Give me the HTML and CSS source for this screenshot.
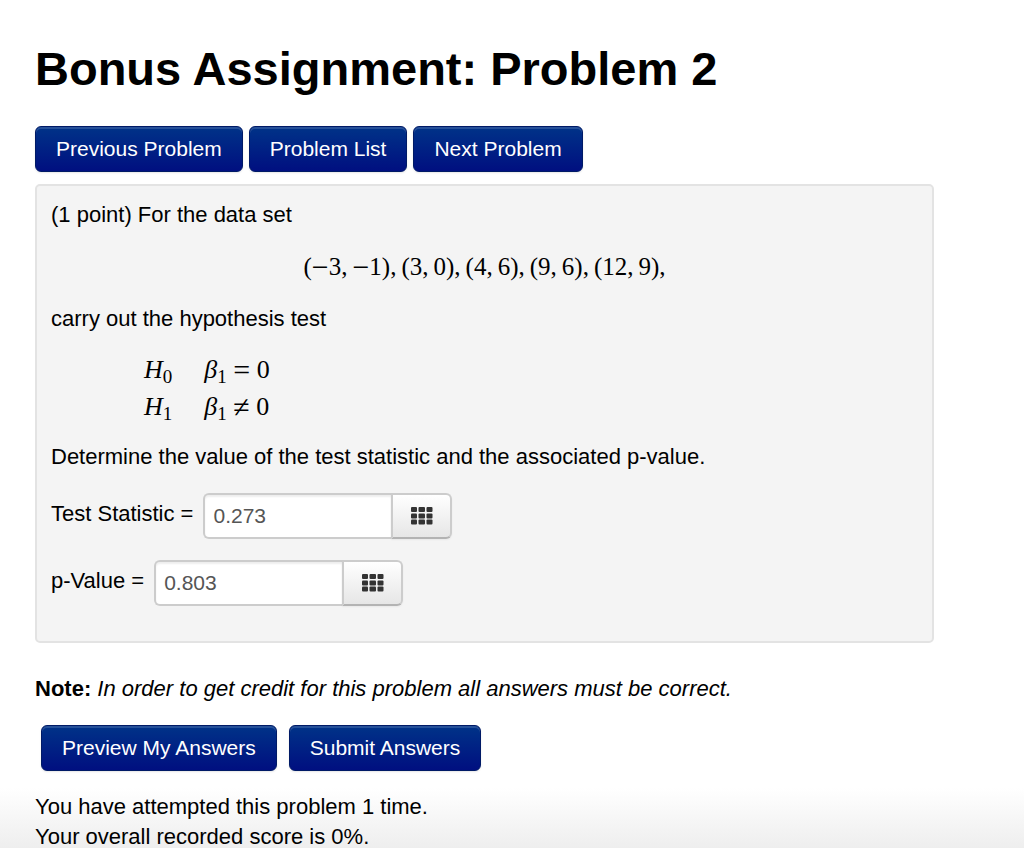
FILE: index.html
```html
<!DOCTYPE html>
<html lang="en">
<head>
  <meta charset="UTF-8" />
  <meta name="viewport" content="width=device-width, initial-scale=1.0"/>
  <title>Bonus Assignment: Problem 2</title>
  <link rel="stylesheet" href="styles.css">
</head>
<body>
  <h1>Bonus Assignment: Problem 2</h1>

  <nav class="problem-nav">
    <button type="button" class="btn">Previous Problem</button>
    <button type="button" class="btn">Problem List</button>
    <button type="button" class="btn">Next Problem</button>
  </nav>

  <form id="problemForm">
    <div class="problem">
      <p>(1 point) For the data set</p>
      <p class="math display">(<span class="op">−</span>3,&thinsp;<span class="op">−</span>1),&thinsp;(3,&thinsp;0),&thinsp;(4,&thinsp;6),&thinsp;(9,&thinsp;6),&thinsp;(12,&thinsp;9),</p>
      <p>carry out the hypothesis test</p>
      <table class="math hypotheses">
        <tr>
          <td><i>H</i><sub>0</sub></td>
          <td><i>β</i><sub>1</sub> <span class="op">=</span> 0</td>
        </tr>
        <tr>
          <td><i>H</i><sub>1</sub></td>
          <td><i>β</i><sub>1</sub> <span class="op">≠</span> 0</td>
        </tr>
      </table>
      <p>Determine the value of the test statistic and the associated p-value.</p>

      <div class="answer">
        <label for="testStatistic">Test Statistic =</label>
        <div class="input-group">
          <input type="text" id="testStatistic" value="0.273" />
          <button type="button" class="keypad" aria-label="Open equation editor">
            <svg width="22" height="18" viewBox="0 0 22 18" fill="#333">
              <rect x="0" y="0" width="6" height="5" rx="1"/><rect x="7.500" y="0" width="6.500" height="5" rx="1"/><rect x="15.500" y="0" width="6" height="5" rx="1"/>
              <rect x="0" y="6.500" width="6" height="5" rx="1"/><rect x="7.500" y="6.500" width="6.500" height="5" rx="1"/><rect x="15.500" y="6.500" width="6" height="5" rx="1"/>
              <rect x="0" y="12.500" width="6" height="5" rx="1"/><rect x="7.500" y="12.500" width="6.500" height="5" rx="1"/><rect x="15.500" y="12.500" width="6" height="5" rx="1"/>
            </svg>
          </button>
        </div>
      </div>

      <div class="answer">
        <label for="pValue">p-Value =</label>
        <div class="input-group">
          <input type="text" id="pValue" value="0.803" />
          <button type="button" class="keypad" aria-label="Open equation editor">
            <svg width="22" height="18" viewBox="0 0 22 18" fill="#333">
              <rect x="0" y="0" width="6" height="5" rx="1"/><rect x="7.500" y="0" width="6.500" height="5" rx="1"/><rect x="15.500" y="0" width="6" height="5" rx="1"/>
              <rect x="0" y="6.500" width="6" height="5" rx="1"/><rect x="7.500" y="6.500" width="6.500" height="5" rx="1"/><rect x="15.500" y="6.500" width="6" height="5" rx="1"/>
              <rect x="0" y="12.500" width="6" height="5" rx="1"/><rect x="7.500" y="12.500" width="6.500" height="5" rx="1"/><rect x="15.500" y="12.500" width="6" height="5" rx="1"/>
            </svg>
          </button>
        </div>
      </div>
    </div>

    <p class="note"><b>Note:</b> <em>In order to get credit for this problem all answers must be correct.</em></p>

    <div class="submit-row">
      <button type="button" class="btn">Preview My Answers</button>
      <button type="submit" class="btn">Submit Answers</button>
    </div>
  </form>

  <p class="score">You have attempted this problem 1 time.<br>Your overall recorded score is 0%.</p>
</body>
</html>
```
FILE: styles.css
```css
* {
  box-sizing: border-box;
}
html {
  min-height: 100%;
  background: linear-gradient(to top, #eee, #fff 60px) fixed;
}
body {
  margin: 0;
  padding: 38px 90px 0 35px;
  font-family: "Liberation Sans", Arial, sans-serif;
  font-size: 22px;
  line-height: 30px;
  color: #000;
}
h1 {
  margin: 0 0 26px;
  font-size: 47px;
  line-height: 62px;
}
p {
  margin: 0;
}
button {
  font-family: inherit;
  cursor: pointer;
}
.btn {
  height: 46px;
  padding: 0 20px;
  border: 1px solid #001a66;
  border-radius: 6px;
  background: linear-gradient(#003388, #000f80);
  box-shadow: inset 0 2px 0 rgba(255, 255, 255, 0.15), 0 1px 2px rgba(0, 0, 0, 0.1);
  color: #fff;
  font-size: 21px;
}
.problem-nav {
  display: flex;
  gap: 6px;
  margin-bottom: 12px;
}
.problem {
  padding: 14px 14px 35px;
  background: #f4f4f4;
  border: 2px solid #e3e3e3;
  border-radius: 5px;
}
.math {
  font-family: "Liberation Serif", "Times New Roman", serif;
  font-size: 26px;
}
.display {
  margin: 22px 0;
  font-size: 25px;
  text-align: center;
}
.math .op {
  font-size: 30px;
  line-height: 0;
  vertical-align: -2px;
}
.math sub {
  font-size: 19px;
  line-height: 0;
  vertical-align: -5px;
}
.hypotheses {
  margin: 17px 0 17px 93px;
  border-collapse: collapse;
}
.hypotheses td {
  height: 37px;
  padding: 0 32px 0 0;
}
.answer {
  display: flex;
  align-items: center;
  gap: 10px;
  margin-top: 21px;
}
.answer label {
  padding-bottom: 4px;
}
.input-group {
  display: flex;
}
.input-group input {
  width: 188px;
  height: 46px;
  padding: 0 8px;
  border: 2px solid #ccc;
  border-right: 0;
  border-radius: 6px 0 0 6px;
  background: #fff;
  box-shadow: inset 0 2px 2px rgba(0, 0, 0, 0.07);
  color: #555;
  font-family: inherit;
  font-size: 21px;
}
.keypad {
  display: flex;
  align-items: center;
  justify-content: center;
  width: 61px;
  height: 46px;
  padding: 0 0 1px;
  border: 2px solid #ccc;
  border-bottom-color: #b3b3b3;
  border-radius: 0 6px 6px 0;
  background: linear-gradient(#fff, #e6e6e6);
  box-shadow: 0 1px 2px rgba(0, 0, 0, 0.05);
}
.note {
  margin: 31px 0 21px;
}
.submit-row {
  display: flex;
  gap: 12px;
  margin: 0 6px 21px;
}
```
